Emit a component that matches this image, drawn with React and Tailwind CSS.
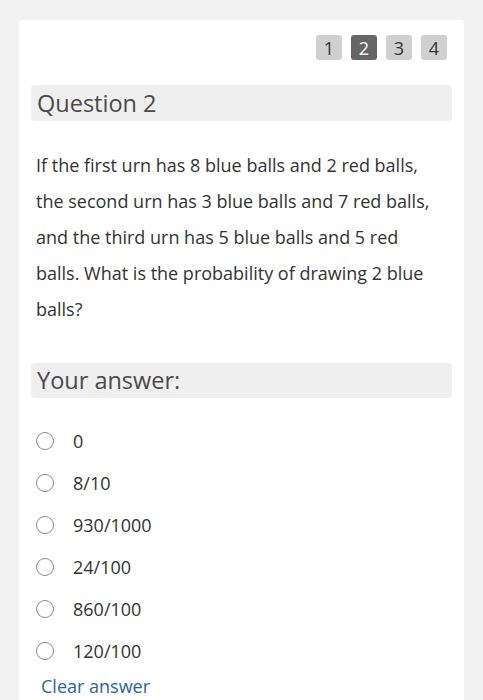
import { useState } from 'react'

const options = ['0', '8/10', '930/1000', '24/100', '860/100', '120/100']

export default function App() {
  const [page, setPage] = useState(2)
  const [answer, setAnswer] = useState(null)

  return (
    <div
      className="min-h-[700px] bg-[#f2f2f2] pt-5 pl-[19px] pr-[19px]"
      style={{ fontFamily: '"Open Sans", sans-serif' }}
    >
      <div className="bg-white rounded-t-[4px] px-3 pt-[15px] pb-4 min-h-[690px]">
        {/* Pager */}
        <div className="flex justify-end gap-[9px] pr-[5px]">
          {[1, 2, 3, 4].map((n) => (
            <button
              key={n}
              onClick={() => setPage(n)}
              className={`w-[26px] h-[25px] rounded-[3px] flex items-center justify-center text-[18px] leading-none ${
                page === n ? 'bg-[#666666] text-white' : 'bg-[#d0d0d0] text-[#333]'
              }`}
            >
              {n}
            </button>
          ))}
        </div>

        <div className="mt-[25px] h-9 bg-[#efefef] rounded-[4px] px-1.5 flex items-center">
          <h2 className="text-[23.5px] text-[#4a4a4a] pt-px">Question 2</h2>
        </div>

        <p className="mt-[26px] pl-[5px] pr-[17px] text-[18px] leading-9 text-[#333]">
          If the first urn has 8 blue balls and 2 red balls, the second urn has 3 blue balls and 7
          red balls, and the third urn has 5 blue balls and 5 red balls. What is the probability of
          drawing 2 blue balls?
        </p>

        <div className="mt-9 h-[35px] bg-[#efefef] rounded-[4px] px-1.5 flex items-center">
          <h3 className="text-[23.5px] text-[#4a4a4a]">Your answer:</h3>
        </div>

        <div className="mt-[22px] pl-[5px]">
          {options.map((o) => (
            <label key={o} className="h-[42px] flex items-center gap-[19px] cursor-pointer">
              <span
                onClick={() => setAnswer(o)}
                className="w-[18px] h-[18px] rounded-full border-[1.5px] border-[#8a8a8a] flex items-center justify-center"
              >
                {answer === o && <span className="w-[9px] h-[9px] rounded-full bg-[#555]" />}
              </span>
              <span className="text-[18px] text-[#333]">{o}</span>
            </label>
          ))}
          <button
            onClick={() => setAnswer(null)}
            className="mt-[2px] text-[18px] text-[#2a6496] leading-6 pl-[5px]"
          >
            Clear answer
          </button>
        </div>
      </div>
    </div>
  )
}
